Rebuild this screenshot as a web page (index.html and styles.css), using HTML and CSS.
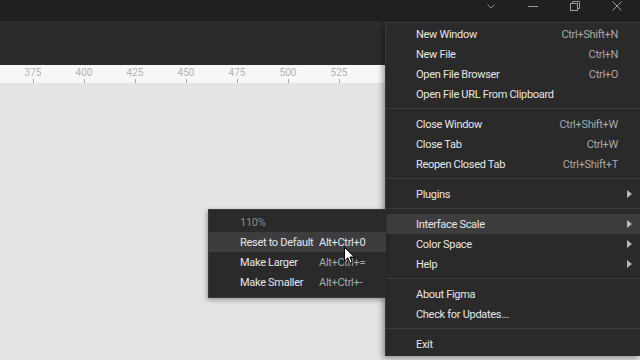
FILE: index.html
```html
<!DOCTYPE html>
<html lang="en">
<head>
    <meta charset="UTF-8">
    <title>Figma menu</title>
    <link rel="stylesheet" href="styles.css">
</head>
<body>
    <div class="titlebar">
        <div class="win-controls">
            <svg class="win-icon" width="12" height="12" viewBox="0 0 12 12"><path d="M2.5 4.5 L6 8 L9.5 4.5" fill="none" stroke="#8d8d8d" stroke-width="1"/></svg>
            <svg class="win-icon" width="12" height="12" viewBox="0 0 12 12"><path d="M1 6.5 H11" stroke="#9a9a9a" stroke-width="1"/></svg>
            <svg class="win-icon" width="12" height="12" viewBox="0 0 12 12"><rect x="1.5" y="3.5" width="7" height="7" fill="none" stroke="#9a9a9a"/><path d="M3.5 3.5 V1.5 H10.5 V8.5 H8.5" fill="none" stroke="#9a9a9a"/></svg>
            <svg class="win-icon" width="12" height="12" viewBox="0 0 12 12"><path d="M1.5 1.5 L10.5 10.5 M10.5 1.5 L1.5 10.5" stroke="#9a9a9a" stroke-width="1"/></svg>
        </div>
    </div>
    <div class="toolbar"></div>
    <div class="workspace">
        <div class="ruler">
            <div class="mark">375</div>
            <div class="mark">400</div>
            <div class="mark">425</div>
            <div class="mark">450</div>
            <div class="mark">475</div>
            <div class="mark">500</div>
            <div class="mark">525</div>
        </div>
        <div class="canvas"></div>
    </div>

    <!-- main app menu -->
    <div class="menu main-menu">
        <div class="item"><span>New Window</span><span class="key">Ctrl+Shift+N</span></div>
        <div class="item"><span>New File</span><span class="key">Ctrl+N</span></div>
        <div class="item"><span>Open File Browser</span><span class="key">Ctrl+O</span></div>
        <div class="item"><span>Open File URL From Clipboard</span><span class="key"></span></div>
        <div class="sep"></div>
        <div class="item"><span>Close Window</span><span class="key">Ctrl+Shift+W</span></div>
        <div class="item"><span>Close Tab</span><span class="key">Ctrl+W</span></div>
        <div class="item"><span>Reopen Closed Tab</span><span class="key">Ctrl+Shift+T</span></div>
        <div class="sep"></div>
        <div class="item"><span>Plugins</span><span class="arrow"></span></div>
        <div class="sep"></div>
        <div class="item active"><span>Interface Scale</span><span class="arrow"></span></div>
        <div class="item"><span>Color Space</span><span class="arrow"></span></div>
        <div class="item"><span>Help</span><span class="arrow"></span></div>
        <div class="sep"></div>
        <div class="item"><span>About Figma</span><span class="key"></span></div>
        <div class="item"><span>Check for Updates...</span><span class="key"></span></div>
        <div class="sep"></div>
        <div class="item"><span>Exit</span><span class="key"></span></div>
    </div>

    <!-- Interface Scale submenu -->
    <div class="menu sub-menu">
        <div class="sub-item muted"><span>110%</span><span></span></div>
        <div class="sub-item active"><span>Reset to Default</span><span class="sub-key bright">Alt+Ctrl+0</span></div>
        <div class="sub-item"><span>Make Larger</span><span class="sub-key">Alt+Ctrl+=</span></div>
        <div class="sub-item"><span>Make Smaller</span><span class="sub-key">Alt+Ctrl+-</span></div>
    </div>

    <svg class="cursor" width="12" height="18" viewBox="0 0 12 18"><path d="M0.5 0.5 V14 L3.8 10.8 L6.2 16.2 L8.2 15.3 L5.9 10 H10.5 Z" fill="#fff" stroke="#000" stroke-width="1"/></svg>
</body>
</html>
```

FILE: styles.css
```css
body {
    margin: 0;
    width: 640px;
    height: 360px;
    overflow: hidden;
    font-family: Roboto, "Noto Sans", sans-serif;
    font-size: 11px;
    background-color: #e5e5e5;
    position: relative;
}
.titlebar {
    height: 21px;
    background-color: #202020;
    display: flex;
    justify-content: flex-end;
}
.win-controls {
    display: flex;
    align-items: center;
    gap: 30px;
    padding-right: 17px;
    height: 12px;
}
.toolbar {
    height: 44px;
    background-color: #2c2c2c;
}
.ruler {
    height: 18px;
    background-color: #f7f7f7;
    display: flex;
    padding-left: 21px;
    gap: 27px;
}
.mark {
    width: 24px;
    text-align: center;
    font-size: 10px;
    color: #b4b4b4;
    line-height: 16px;
    position: relative;
    height: 18px;
}
.mark::after {
    content: "";
    position: absolute;
    left: 12px;
    top: 14px;
    width: 1px;
    height: 4px;
    background-color: #a8a8a8;
}
.canvas {
    height: 277px;
    background-color: #e4e4e4;
}

/* menus */
.menu {
    position: absolute;
    background-color: #2a2a2b;
    color: #e6e6e6;
    box-sizing: border-box;
    white-space: nowrap;
    letter-spacing: -0.3px;
}
.main-menu {
    top: 22px;
    left: 385px;
    width: 255px;
    padding: 1px 0 2px 0;
    border-left: 1px solid #383839;
    border-top: 1px solid #383839;
    box-shadow: -2px 2px 6px rgba(0, 0, 0, 0.4);
}
.item {
    height: 20px;
    display: flex;
    align-items: center;
    justify-content: space-between;
    padding-left: 30px;
    padding-right: 22px;
}
.item.active {
    background-color: #3d3d3f;
}
.key {
    color: #a9a9a9;
}
.arrow {
    width: 0;
    height: 0;
    border-top: 4px solid transparent;
    border-bottom: 4px solid transparent;
    border-left: 5px solid #b8b8b8;
    margin-right: -14px;
}
.sep {
    height: 1px;
    background-color: #3b3b3c;
    margin: 4px 0 5px 0;
}
.sub-menu {
    top: 209px;
    left: 208px;
    width: 178px;
    padding: 2px 0 5px 0;
    border: 1px solid #3a3a3b;
    border-right: none;
    box-shadow: -1px 2px 5px rgba(0, 0, 0, 0.35);
}
.sub-item {
    height: 20px;
    display: grid;
    grid-template-columns: 79px 1fr;
    align-items: center;
    padding-left: 31px;
}
.sub-item.active {
    background-color: #3d3d3f;
}
.sub-item.muted {
    color: #8a8a8a;
}
.sub-key {
    color: #a9a9a9;
}
.sub-key.bright {
    color: #e6e6e6;
}
.cursor {
    position: absolute;
    left: 344px;
    top: 247px;
}
```
